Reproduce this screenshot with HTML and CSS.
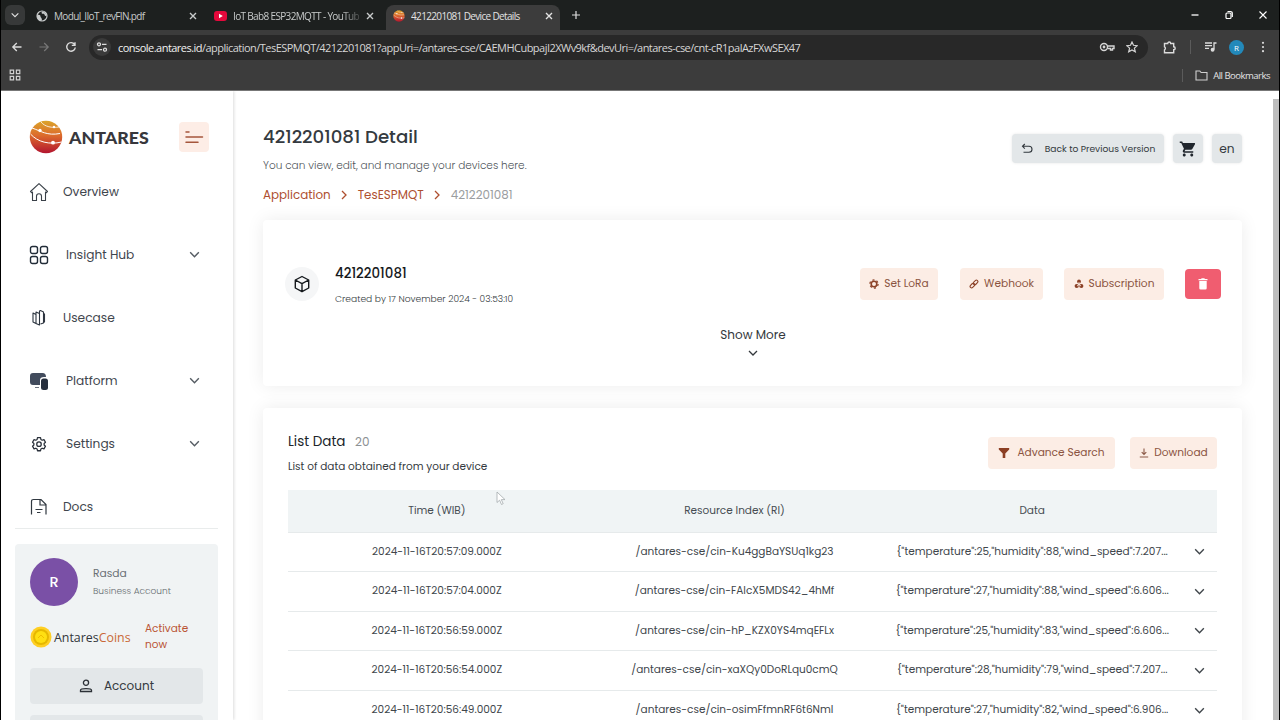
FILE: index.html
```html
<!DOCTYPE html>
<html lang="en">
<head>
    <meta charset="UTF-8">
    <meta name="viewport" content="width=device-width, initial-scale=1.0">
    <title>4212201081 Device Details</title>
    <link rel="stylesheet" href="styles.css">
</head>
<body>
    <svg class="sprite" width="0" height="0">
        <symbol id="chevron" viewBox="0 0 12 12"><path d="M2 4l4 4 4-4" fill="none" stroke="currentColor" stroke-width="1.3"/></symbol>
        <symbol id="close" viewBox="0 0 10 10"><path d="M2 2l6 6M8 2l-6 6" fill="none" stroke="currentColor" stroke-width="1.4"/></symbol>
        <symbol id="globe" viewBox="0 0 34 34">
            <defs>
                <linearGradient id="sun" x1="0" y1="0" x2="0" y2="1">
                    <stop offset="0" stop-color="#dba42a"/>
                    <stop offset=".45" stop-color="#dc6b2c"/>
                    <stop offset="1" stop-color="#b3152f"/>
                </linearGradient>
            </defs>
            <circle cx="17" cy="17" r="16.2" fill="url(#sun)"/>
            <g fill="none" stroke="#fff" stroke-width="1">
                <path d="M12 2c4 5 11 6 18 5" opacity=".8"/>
                <path d="M3 8c9 3 15 8 28 5.500"/>
                <path d="M1.500 14c7 8 19 11 31 8"/>
            </g>
            <g fill="#fff"><circle cx="25" cy="7" r="1.200"/><circle cx="11" cy="10.500" r="1.700"/><circle cx="24" cy="22.700" r="1.900"/></g>
        </symbol>
    </svg>

    <div class="browser">
        <div class="tab-strip">
            <div class="tab-search"><svg width="10" height="10"><use href="#chevron"/></svg></div>
            <div class="tab">
                <svg class="favicon" width="12" height="12" viewBox="0 0 12 12"><circle cx="6" cy="6" r="5" fill="none" stroke="#c9cccc" stroke-width="1.2"/><path d="M1.5 5c2-.5 3 .3 3 1.600s1.500 1 1.500 3.900C3 11 1 8.500 1 6zM6 1.500c-1 2 0 2.500 1.500 2.300S8 6.500 10.500 6C10.500 3 8.500 1.500 6 1.500z" fill="#c9cccc"/></svg>
                <span class="tab-title">Modul_IIoT_revFIN.pdf</span>
                <svg width="10" height="10"><use href="#close"/></svg>
            </div>
            <div class="tab tab-youtube">
                <svg class="favicon" width="13" height="12" viewBox="0 0 13 12"><rect y="1" width="13" height="10" rx="3" fill="#e5093c"/><path d="M5 3.800v4.400L8.800 6z" fill="#fff"/></svg>
                <span class="tab-title fade">IoT Bab8 ESP32MQTT - YouTub</span>
                <svg width="10" height="10"><use href="#close"/></svg>
            </div>
            <div class="tab tab-active">
                <svg class="favicon" width="12" height="12"><use href="#globe"/></svg>
                <span class="tab-title">4212201081 Device Details</span>
                <svg width="10" height="10"><use href="#close"/></svg>
            </div>
            <svg class="new-tab" width="10" height="10" viewBox="0 0 10 10"><path d="M5 1v8M1 5h8" stroke="#dedede" stroke-width="1.200"/></svg>
            <div class="window-buttons">
                <svg width="10" height="10" viewBox="0 0 10 10"><path d="M1.500 5h7" stroke="#fff" stroke-width="1.300"/></svg>
                <svg width="10" height="10" viewBox="0 0 10 10" fill="none" stroke="#fff" stroke-width="1.200"><rect x="2" y="3" width="5" height="5.500" rx="1"/><path d="M3.500 1.500h3a1.800 1.800 0 0 1 1.800 1.800V7"/></svg>
                <svg width="10" height="10" viewBox="0 0 10 10"><path d="M1.500 1.500l7 7M8.500 1.500l-7 7" stroke="#fff" stroke-width="1.100"/></svg>
            </div>
        </div>
        <div class="toolbar">
            <div class="nav-buttons">
                <svg width="12" height="12" viewBox="0 0 12 12" fill="none" stroke="#dcdcdc" stroke-width="1.300"><path d="M10.500 6H2M5.800 2L1.800 6l4 4"/></svg>
                <svg width="12" height="12" viewBox="0 0 12 12" fill="none" stroke="#777" stroke-width="1.200"><path d="M1.500 6H10M6.200 2l4 4-4 4"/></svg>
                <svg width="12" height="12" viewBox="0 0 12 12" fill="none" stroke="#dcdcdc" stroke-width="1.400"><path d="M9.600 3.500A4.300 4.300 0 1 0 10.300 6.500M10 1.200v3.200H6.800"/></svg>
            </div>
            <div class="address-bar">
                <span class="site-info"><svg width="12" height="12" viewBox="0 0 12 12" fill="none" stroke="#dcdcdc" stroke-width="1.300"><circle cx="3" cy="3.300" r="1.500"/><path d="M6 3.300h4.500M1.500 8.700H6"/><circle cx="9" cy="8.700" r="1.500"/></svg></span>
                <span class="url">console.antares.id<span>/application/TesESPMQT/4212201081?appUri=/antares-cse/CAEMHCubpajI2XWv9kf&amp;devUri=/antares-cse/cnt-cR1palAzFXwSEX47</span></span>
                <svg width="16" height="12" viewBox="0 0 16 12" fill="none" stroke="#d5d5d5" stroke-width="1.400"><circle cx="5" cy="6" r="3.500"/><circle cx="5" cy="6" r=".7"/><path d="M8.500 5H15v2.500h-1.500V9h-2V7.500h-3"/></svg>
                <svg width="12" height="12" viewBox="0 0 12 12" fill="none" stroke="#d5d5d5" stroke-width="1.200"><path d="M6 1l1.500 3.300 3.700.4-2.800 2.400.9 3.700L6 8.900l-3.300 1.900.9-3.700L.8 4.700l3.700-.4z"/></svg>
            </div>
            <div class="toolbar-right">
                <svg width="13" height="13" viewBox="0 0 13 13" fill="none" stroke="#dcdcdc" stroke-width="1.400"><path d="M1.500 2.500H4.700a1.500 1.500 0 0 1 3 0h3v3.300a1.500 1.500 0 0 1 0 3v3H1.500V8.800a1.700 1.700 0 0 0 0-3z"/></svg>
                <i class="separator"></i>
                <svg width="13" height="12" viewBox="0 0 13 12" fill="none" stroke="#dcdcdc" stroke-width="1.300"><path d="M1 2h7M1 4.700h7M1 7.400h4M12.500 2H10v6.500"/><circle cx="8.600" cy="8.800" r="1.300" fill="#dcdcdc"/></svg>
                <span class="profile">R</span>
                <svg width="4" height="12" viewBox="0 0 4 12" fill="#dcdcdc"><circle cx="2" cy="1.800" r="1.100"/><circle cx="2" cy="6" r="1.100"/><circle cx="2" cy="10.200" r="1.100"/></svg>
            </div>
        </div>
        <div class="bookmarks">
            <svg width="12" height="12" viewBox="0 0 12 12" fill="none" stroke="#d0d0d0" stroke-width="1.200"><path d="M1.200 1.200h3.400v3.400H1.200zM7.400 1.200h3.400v3.400H7.400zM1.200 7.400h3.400v3.400H1.200zM7.400 7.400h3.400v3.400H7.400z"/></svg>
            <div class="all-bookmarks">
                <svg width="13" height="11" viewBox="0 0 13 11" fill="none" stroke="#d0d0d0" stroke-width="1.100"><path d="M1 1h3.800l1.300 1.500H12V10H1z"/></svg>
                <span>All Bookmarks</span>
            </div>
        </div>
    </div>

    <div class="page">
        <aside class="sidebar">
            <div class="brand">
                <svg width="34" height="34"><use href="#globe"/></svg>
                <span class="brand-name">ANTARES</span>
                <button class="menu-toggle"><svg width="20" height="14" viewBox="0 0 20 14" stroke="#a5563c" stroke-width="1.500" stroke-linecap="round"><path d="M2 2h3M2 7h16.500M2 12.200h12"/></svg></button>
            </div>

            <nav class="menu">
                <a class="menu-item">
                    <svg width="20" height="20" viewBox="0 0 20 20" fill="none" stroke="#394048" stroke-width="1.100" stroke-linejoin="round"><path d="M1.500 9.500L10 1.700l8.500 7.800-1 1.200-1-.7v8.500h-4v-4.200a2.500 2.500 0 0 0-5 0v4.200h-4V10l-1 .7z"/></svg>
                    <span>Overview</span>
                </a>
                <a class="menu-item expandable">
                    <svg width="20" height="20" viewBox="0 0 20 20" fill="none" stroke="#222c38" stroke-width="1.400"><rect x="1.500" y="1.500" width="7" height="7" rx="2"/><rect x="11.500" y="1.500" width="7" height="7" rx="2"/><rect x="1.500" y="11.500" width="7" height="7" rx="2"/><rect x="11.500" y="11.500" width="7" height="7" rx="2"/></svg>
                    <span>Insight Hub</span>
                    <svg class="arrow" width="13" height="13"><use href="#chevron"/></svg>
                </a>
                <a class="menu-item">
                    <svg width="20" height="20" viewBox="0 0 20 20" fill="none" stroke="#2d3540" stroke-width="1.100" stroke-linejoin="round"><path d="M4 5l3 1.500v9L4 14zM7 7.500V4l3.500 1.500V17L7 15.500M10.500 7V3l1-.5 3 1.500v11l-3 1M14.500 5.500l1 .5v8l-1.500.5"/></svg>
                    <span>Usecase</span>
                </a>
                <a class="menu-item expandable">
                    <svg width="20" height="20" viewBox="0 0 20 20" fill="#424c5d"><path d="M4 2h9.500q3.500 0 3.500 4h-2q-4 0-4 3v5H4q-3 0-3-3V5q0-3 3-3z"/><path d="M6 16.500h4" stroke="#6d7480"/><rect x="12" y="7.500" width="7" height="11.500" rx="2.500" fill="#252e3c"/></svg>
                    <span>Platform</span>
                    <svg class="arrow" width="13" height="13"><use href="#chevron"/></svg>
                </a>
                <a class="menu-item expandable">
                    <svg width="18" height="18" viewBox="0 0 20 20" fill="none" stroke="#29303a" stroke-width="1.400" stroke-linejoin="round"><path d="M8.300 3h3.400l.4 2 1.400.8 2-.7 1.700 3-1.500 1.300v1.700l1.500 1.300-1.700 3-2-.7-1.400.8-.4 2H8.300l-.4-2-1.400-.8-2 .7-1.700-3 1.500-1.300V9.400L2.800 8.100l1.700-3 2 .7L7.900 5z"/><circle cx="10" cy="10.200" r="2.500"/></svg>
                    <span>Settings</span>
                    <svg class="arrow" width="13" height="13"><use href="#chevron"/></svg>
                </a>
                <a class="menu-item">
                    <svg width="20" height="20" viewBox="0 0 20 20" fill="none" stroke="#303840" stroke-width="1.200"><path d="M2.500 17.500V4.500q0-2 2-2H12l5 5v10M11 2.500V8h6M6.500 12.500h7M8 15.500h3.500"/></svg>
                    <span>Docs</span>
                </a>
            </nav>

            <div class="account-card">
                <div class="user">
                    <span class="avatar">R</span>
                    <div>
                        <div class="user-name">Rasda</div>
                        <div class="user-type">Business Account</div>
                    </div>
                </div>
                <div class="coins">
                    <svg width="22" height="22" viewBox="0 0 22 22"><circle cx="11" cy="11" r="10.500" fill="#ffcf24"/><circle cx="11" cy="11" r="8" fill="#e6b800"/><circle cx="11" cy="11" r="6" fill="#ffdf12"/><path d="M8 12l3-3 3 3" fill="none" stroke="#f1bd00"/></svg>
                    <span class="coins-name">Antares<b>Coins</b></span>
                    <a class="activate">Activate now</a>
                </div>
                <button class="account-button">
                    <svg width="14" height="14" viewBox="0 0 14 14" fill="none" stroke="#2b3036" stroke-width="1.300"><circle cx="7" cy="3.800" r="2.600"/><path d="M1.500 12.500v-1.200C1.500 9 12.500 9 12.500 11.300v1.200z"/></svg>
                    <span>Account</span>
                </button>
                <button class="account-button"></button>
            </div>
        </aside>

        <main class="content">
            <header class="page-header">
                <div>
                    <h1>4212201081 Detail</h1>
                    <p class="lead">You can view, edit, and manage your devices here.</p>
                    <div class="breadcrumb">
                        <a>Application</a>
                        <svg width="12" height="12"><use href="#chevron"/></svg>
                        <a>TesESPMQT</a>
                        <svg width="12" height="12"><use href="#chevron"/></svg>
                        <span>4212201081</span>
                    </div>
                </div>
                <div class="header-actions">
                    <button class="gray-button back-button">
                        <svg width="12" height="12" viewBox="0 0 12 12" fill="none" stroke="#32383e" stroke-width="1.100"><path d="M1.500 3.300H8a3 3 0 0 1 0 6H2.500M3.800 1L1.500 3.300l2.300 2.300"/></svg>
                        <span>Back to Previous Version</span>
                    </button>
                    <button class="gray-button"><svg width="18" height="18" viewBox="0 0 24 24" fill="#20262d"><path d="M7 18c-1.100 0-2 .9-2 2s.9 2 2 2 2-.9 2-2-.9-2-2-2zM1 2v2h2l3.600 7.600-1.400 2.400C4.500 15.400 5.500 17 7 17h12v-2H7.400l1.100-2h7.500c.7 0 1.400-.4 1.700-1l3.600-6.500c.4-.7-.1-1.500-.9-1.500H5.200L4.300 2zM17 18c-1.100 0-2 .9-2 2s.9 2 2 2 2-.9 2-2-.9-2-2-2z"/></svg></button>
                    <button class="gray-button lang">en</button>
                </div>
            </header>

            <section class="card device-card">
                <div class="device-row">
                    <span class="device-icon"><svg width="18" height="18" viewBox="0 0 18 18" fill="none" stroke="#15191d" stroke-width="1.400" stroke-linejoin="round"><path d="M9 1.500l6.700 3.500v8L9 16.700 2.300 13V5zM2.300 5L9 8.700 15.700 5M9 8.700v8"/></svg></span>
                    <div class="device-info">
                        <div class="device-name">4212201081</div>
                        <div class="device-date">Created by 17 November 2024 - 03:53:10</div>
                    </div>
                    <div class="device-actions">
                        <button class="soft-button lora">
                            <svg width="10" height="10" viewBox="0 0 10 10"><circle cx="5" cy="5" r="2.800" fill="none" stroke="#8c4228" stroke-width="1.600"/><circle cx="5" cy="5" r="4.100" fill="none" stroke="#8c4228" stroke-width="1.200" stroke-dasharray="2.100 2.190"/></svg>
                            <span>Set LoRa</span>
                        </button>
                        <button class="soft-button webhook">
                            <svg width="10" height="10" viewBox="0 0 10 10" fill="none" stroke="#8c4228" stroke-width="1.100"><rect x="-2.600" y="-1.500" width="5.200" height="3" rx="1.500" transform="translate(6.600 3.400) rotate(-45)"/><rect x="-2.600" y="-1.500" width="5.200" height="3" rx="1.500" transform="translate(3.400 6.600) rotate(-45)"/></svg>
                            <span>Webhook</span>
                        </button>
                        <button class="soft-button subscription">
                            <svg width="10" height="10" viewBox="0 0 10 10" fill="#8c4228"><circle cx="5" cy="2.500" r="1.900"/><circle cx="2.700" cy="7" r="2.100"/><circle cx="7.300" cy="7" r="2.100"/><path d="M5 3v2.500L3 7M5 5.500L7 7" stroke="#fcede5" stroke-width=".8" fill="none"/></svg>
                            <span>Subscription</span>
                        </button>
                        <button class="delete-button"><svg width="12" height="14" viewBox="0 0 12 14" fill="#fff"><path d="M1.500 2H4l.7-.7h2.600L8 2h2.500v1.300h-9zM2.300 4h7.400v7.200q0 1.300-1.300 1.300H3.600q-1.300 0-1.300-1.300z"/></svg></button>
                    </div>
                </div>
                <div class="show-more">
                    <span>Show More</span>
                    <svg width="12" height="12"><use href="#chevron"/></svg>
                </div>
            </section>

            <section class="card list-card">
                <div class="list-header">
                    <div>
                        <h2>List Data <small>20</small></h2>
                        <p>List of data obtained from your device</p>
                    </div>
                    <div class="list-actions">
                        <button class="soft-button search">
                            <svg width="12" height="12" viewBox="0 0 12 12" fill="#8c3f24"><path d="M.8 1h10.400v1.500L7.300 6.500V11H4.700V6.500L.8 2.500z"/></svg>
                            <span>Advance Search</span>
                        </button>
                        <button class="soft-button download">
                            <svg width="10" height="10" viewBox="0 0 10 10" fill="none" stroke="#8c5a48" stroke-width="1.100"><path d="M5 .5v5.800M2.700 4.200L5 6.500l2.300-2.300M.8 9h8.400"/></svg>
                            <span>Download</span>
                        </button>
                    </div>
                </div>
                <table>
                    <thead>
                        <tr><th>Time (WIB)</th><th>Resource Index (RI)</th><th>Data</th><th class="toggle"></th></tr>
                    </thead>
                    <tbody>
                        <tr><td>2024-11-16T20:57:09.000Z</td><td>/antares-cse/cin-Ku4ggBaYSUq1kg23</td><td>{"temperature":25,"humidity":88,"wind_speed":7.207...</td><td class="toggle"><svg width="13" height="13"><use href="#chevron"/></svg></td></tr>
                        <tr><td>2024-11-16T20:57:04.000Z</td><td>/antares-cse/cin-FAIcX5MDS42_4hMf</td><td>{"temperature":27,"humidity":88,"wind_speed":6.606...</td><td class="toggle"><svg width="13" height="13"><use href="#chevron"/></svg></td></tr>
                        <tr><td>2024-11-16T20:56:59.000Z</td><td>/antares-cse/cin-hP_KZX0YS4mqEFLx</td><td>{"temperature":25,"humidity":83,"wind_speed":6.606...</td><td class="toggle"><svg width="13" height="13"><use href="#chevron"/></svg></td></tr>
                        <tr><td>2024-11-16T20:56:54.000Z</td><td>/antares-cse/cin-xaXQy0DoRLqu0cmQ</td><td>{"temperature":28,"humidity":79,"wind_speed":7.207...</td><td class="toggle"><svg width="13" height="13"><use href="#chevron"/></svg></td></tr>
                        <tr><td>2024-11-16T20:56:49.000Z</td><td>/antares-cse/cin-osimFfmnRF6t6NmI</td><td>{"temperature":27,"humidity":82,"wind_speed":6.906...</td><td class="toggle"><svg width="13" height="13"><use href="#chevron"/></svg></td></tr>
                    </tbody>
                </table>
            </section>
        </main>
        <div class="scrollbar"></div>
    </div>

    <svg class="cursor" width="10" height="15" viewBox="0 0 10 15"><path d="M1 1v10.500l2.600-2.300 1.900 4.300 1.700-.8-1.900-4.100H9z" fill="#fff" stroke="#a5abad" stroke-width=".8"/></svg>
</body>
</html>
```
FILE: styles.css
```css
* {
    box-sizing: border-box;
}

body {
    margin: 0;
    width: 1280px;
    height: 720px;
    overflow: hidden;
    border-left: 1px solid #000;
    border-right: 1px solid #000;
    background: #fff;
    color: #343a40;
    font-family: 'Poppins', 'Inter', sans-serif;
    font-size: 12px;
}

svg {
    flex: none;
    display: block;
}

.sprite {
    position: absolute;
}

button {
    border: none;
    padding: 0;
    font: inherit;
    color: inherit;
    display: flex;
    align-items: center;
    justify-content: center;
}

/* browser window */
.browser {
    height: 91px;
    background: #3c3c3c;
    border-bottom: 1px solid #777;
    font-family: 'Segoe UI', 'Open Sans', sans-serif;
    color: #e3e3e3;
}

.tab-strip {
    height: 30px;
    background: #1d201f;
    display: flex;
    align-items: center;
}

.tab-search {
    width: 20px;
    height: 20px;
    margin-left: 4px;
    border-radius: 6px;
    background: #373939;
    display: flex;
    align-items: center;
    justify-content: center;
}

.tab {
    width: 175px;
    height: 25px;
    margin-top: 5px;
    padding: 0 2px 4px 11px;
    display: flex;
    align-items: center;
    font-size: 10px;
    letter-spacing: -0.65px;
    color: #c8cbcb;
}

.tab-title {
    flex: 1;
    margin-left: 6px;
    white-space: nowrap;
    overflow: hidden;
}

.fade {
    -webkit-mask-image: linear-gradient(90deg, #000 82%, transparent 100%);
    mask-image: linear-gradient(90deg, #000 82%, transparent 100%);
}

.tab-active {
    width: 174px;
    background: #3c3c3c;
    border-radius: 8px 8px 0 0;
    color: #e3e3e3;
    padding: 0 6px 4px 7px;
}

.tab-youtube {
    width: 186px;
    padding: 0 11px 4px 14px;
}

.new-tab {
    margin-left: 11px;
}

.window-buttons {
    margin-left: auto;
    margin-right: 11px;
    display: flex;
    gap: 24px;
}

.toolbar {
    height: 34px;
    padding-right: 13px;
    display: flex;
    align-items: center;
}

.nav-buttons {
    width: 88px;
    padding-left: 10px;
    display: flex;
    gap: 15px;
}

.address-bar {
    width: 1059px;
    height: 25px;
    padding: 0 10px 0 4px;
    border-radius: 13px;
    background: #282828;
    display: flex;
    align-items: center;
    gap: 11px;
}

.site-info {
    width: 18px;
    height: 18px;
    border-radius: 50%;
    background: #3a3a3a;
    display: flex;
    align-items: center;
    justify-content: center;
}

.url {
    flex: 1;
    margin-left: -4px;
    font-size: 11px;
    letter-spacing: -0.53px;
    color: #f2f2f2;
}

.url span {
    color: #d6d6d6;
}

.toolbar-right {
    flex: 1;
    margin-left: 15px;
    display: flex;
    align-items: center;
}

.separator {
    width: 1px;
    height: 14px;
    margin: 0 13px 0 14px;
    background: #5b5b5b;
}

.profile {
    width: 15px;
    height: 15px;
    margin: 0 17px 0 12px;
    border-radius: 50%;
    background: #2389ba;
    color: #fff;
    font-size: 8px;
    line-height: 15px;
    text-align: center;
}

.bookmarks {
    height: 22px;
    padding: 0 9px 0 8px;
    display: flex;
    align-items: center;
    justify-content: space-between;
}

.all-bookmarks {
    height: 13px;
    padding-left: 12px;
    border-left: 1px solid #5b5b5b;
    display: flex;
    align-items: center;
    gap: 5px;
    font-size: 9.5px;
    letter-spacing: -0.5px;
}

/* page */
.page {
    height: 629px;
    display: flex;
    overflow: hidden;
}

.sidebar {
    width: 232px;
    flex: none;
    padding: 30px 15px 0 14px;
    box-shadow: 1px 0 3px rgba(0, 0, 0, 0.14);
}

.brand {
    display: flex;
    align-items: center;
    height: 32px;
    padding-left: 14px;
}

.brand-name {
    width: 81px;
    margin: 0 29px 0 6px;
    font-family: 'Lato', sans-serif;
    font-size: 17.8px;
    font-weight: 900;
    color: #37373c;
}

.menu-toggle {
    width: 30px;
    height: 30px;
    border-radius: 4px;
    background: #fdede6;
}

.menu {
    padding: 7px 17px 0 14px;
    border-bottom: 1px solid #e9ecec;
    height: 376px;
}

.menu-item {
    height: 63px;
    display: flex;
    align-items: center;
    gap: 14px;
    font-size: 12.2px;
    color: #3f464e;
}

.menu-item svg:first-child {
    width: 20px;
}

.expandable {
    gap: 17px;
}

.arrow {
    margin-left: auto;
    color: #555c63;
}

.account-card {
    height: 200px;
    margin-top: 15px;
    padding: 14px 15px;
    border-radius: 4px;
    background: #f0f3f4;
}

.user {
    display: flex;
    align-items: center;
    gap: 15px;
}

.avatar {
    width: 48px;
    height: 48px;
    border-radius: 50%;
    background: #7a50a6;
    color: #fff;
    font-size: 14.5px;
    font-weight: 500;
    line-height: 48px;
    text-align: center;
}

.user-name {
    font-size: 10.7px;
    line-height: 18px;
    color: #696f74;
}

.user-type {
    font-size: 9px;
    line-height: 17px;
    font-weight: 300;
    color: #676d71;
}

.coins {
    height: 62px;
    display: flex;
    align-items: center;
}

.coins-name {
    margin-left: 2px;
    width: 91px;
    font-family: 'Open Sans', sans-serif;
    font-size: 12.4px;
    color: #32363b;
}

.coins-name b {
    font-weight: 400;
    color: #c96836;
}

.activate {
    width: 48px;
    font-size: 10.5px;
    line-height: 16px;
    color: #ba5535;
}

.account-button {
    width: 173px;
    height: 36px;
    margin-bottom: 11px;
    border-radius: 4px;
    background: #e3e7e9;
    gap: 11px;
    font-size: 12px;
}

.content {
    flex: 1;
    padding: 0 31px 0 30px;
}

.page-header {
    height: 129px;
    padding-top: 33px;
    display: flex;
    justify-content: space-between;
}

h1 {
    margin: 0;
    font-size: 18.2px;
    font-weight: 500;
    line-height: 25px;
    color: #343a40;
}

.lead {
    margin: 8px 0 10px;
    font-size: 10.5px;
    font-weight: 300;
    line-height: 18px;
    color: #50565b;
}

.breadcrumb {
    display: flex;
    align-items: center;
    gap: 7.5px;
    font-size: 11.9px;
    line-height: 20px;
    color: #9a9da0;
}

.breadcrumb a,
.breadcrumb svg {
    color: #ae4f2f;
}

.breadcrumb svg {
    transform: rotate(-90deg);
}

.header-actions {
    display: flex;
    gap: 9px;
    padding-top: 10px;
}

.gray-button {
    width: 30px;
    height: 29px;
    border-radius: 4px;
    background: #e3e7e9;
    box-shadow: 0 0 3px rgba(0, 0, 0, 0.1);
    color: #343a40;
}

.back-button {
    width: 152px;
    font-size: 9.15px;
    gap: 12px;
}

.lang {
    font-size: 12.2px;
}

.card {
    border-radius: 4px;
    background: #fff;
    box-shadow: 0 0 18px rgba(0, 0, 0, 0.08);
}

.device-card {
    height: 166px;
    padding: 47px 21px 0 22px;
}

.device-row {
    display: flex;
    align-items: center;
    height: 34px;
}

.device-icon {
    width: 34px;
    height: 34px;
    border-radius: 50%;
    background: #f5f6f7;
    display: flex;
    align-items: center;
    justify-content: center;
}

.device-info {
    margin-left: 16px;
    padding-top: 3px;
    flex: 1;
}

.device-name {
    font-size: 13.4px;
    font-weight: 500;
    line-height: 25px;
    color: #16191c;
}

.device-date {
    font-size: 9.15px;
    line-height: 25px;
    font-weight: 300;
}

.device-actions,
.list-actions {
    display: flex;
    align-items: center;
}

.soft-button {
    height: 32px;
    border-radius: 4px;
    background: #fcede5;
    color: #8b5441;
    font-size: 10.6px;
    gap: 5px;
}

.lora {
    width: 78px;
    margin-right: 22px;
}

.webhook {
    width: 83px;
    margin-right: 21px;
}

.subscription {
    width: 100px;
    margin-right: 21px;
}

.delete-button {
    width: 36px;
    height: 30px;
    border-radius: 4px;
    background: #f05d70;
}

.show-more {
    margin-top: 24px;
    display: flex;
    flex-direction: column;
    align-items: center;
    line-height: 20px;
    gap: 2px;
    color: #33383c;
}

.list-card {
    height: 360px;
    margin-top: 22px;
    padding: 23px 25px 0;
}

.list-header {
    height: 59px;
    display: flex;
    justify-content: space-between;
    align-items: flex-start;
}

h2 {
    margin: 0;
    font-size: 13.5px;
    font-weight: 400;
    line-height: 22px;
    color: #20252a;
}

h2 small {
    margin-left: 6px;
    font-size: 12px;
    color: #8c9093;
}

.list-header p {
    margin: 4px 0 0;
    font-size: 10.5px;
    line-height: 20px;
}

.list-actions {
    padding-top: 6px;
}

.search {
    width: 127px;
    margin-right: 15px;
    gap: 7px;
}

.download {
    width: 87px;
}

table {
    width: 929px;
    border-collapse: collapse;
    table-layout: fixed;
}

th {
    height: 42px;
    padding: 0;
    background: #f0f4f5;
    font-size: 10.5px;
    font-weight: 400;
    color: #464c52;
}

td {
    height: 39.5px;
    padding: 0;
    border-top: 1px solid #e6eaeb;
    font-size: 10.5px;
    text-align: center;
    white-space: nowrap;
    color: #40464b;
}

.toggle {
    width: 36px;
}

.toggle svg {
    margin: auto;
}

.scrollbar {
    width: 6px;
    margin-top: 8px;
    background: #bdbdbd;
}

.cursor {
    position: absolute;
    left: 496px;
    top: 491px;
}
```
